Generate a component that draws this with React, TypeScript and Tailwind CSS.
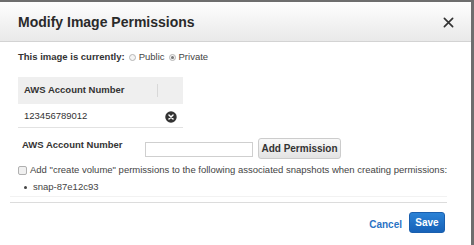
import React from "react";

export default function App() {
  return (
    <div
      className="w-[474px] h-[245px] bg-white border-t-2 border-r-[3px] border-[#6e6e6e] flex flex-col overflow-hidden"
      style={{ fontFamily: '"Liberation Sans", Arial, sans-serif' }}
    >
      <div className="h-[40px] shrink-0 flex items-center justify-between pl-[18px] pr-[17px] bg-gradient-to-b from-[#fefefe] to-[#e9e9e9] border-b border-[#d3d3d3]">
        <div className="text-[14px] font-bold text-[#2a2a2a] mt-[1px]">Modify Image Permissions</div>
        <svg width="11" height="11" viewBox="0 0 12 12" className="mt-[2px]">
          <path d="M1.5 1.5 L10.5 10.5 M10.5 1.5 L1.5 10.5" stroke="#333" strokeWidth="1.8" strokeLinecap="round" />
        </svg>
      </div>

      <div className="flex flex-col text-[9.5px] text-[#333] whitespace-nowrap">
        <div className="flex items-center h-[16px] mt-[7px] pl-[18px]">
          <span className="font-bold">This image is currently:</span>
          <span className="ml-[4px] w-[7px] h-[7px] rounded-full border border-[#b5b5b5] bg-[#f4f4f4]" />
          <span className="ml-[3px] text-[#444]">Public</span>
          <span className="ml-[4px] w-[7px] h-[7px] rounded-full border border-[#b5b5b5] bg-[#f4f4f4] flex items-center justify-center">
            <span className="w-[3px] h-[3px] rounded-full bg-[#777]" />
          </span>
          <span className="ml-[3px] text-[#444]">Private</span>
        </div>

        <div className="ml-[18px] mt-[12px] w-[165px] flex flex-col">
          <div className="h-[27px] bg-[#efefef] flex items-center pl-[6px] relative">
            <span className="font-bold text-[#333]">AWS Account Number</span>
            <span className="absolute left-[139px] top-[7px] w-px h-[13px] bg-[#d8d8d8]" />
          </div>
          <div className="h-[24px] flex items-center justify-between pl-[6px] pr-[6px] border-b border-[#e2e2e2]">
            <span className="text-[#333] mt-[2px]">123456789012</span>
            <svg width="12" height="12" viewBox="0 0 13 13" className="mt-[2px]">
              <circle cx="6.5" cy="6.5" r="6.2" fill="#333" />
              <path d="M4.3 4.3 L8.7 8.7 M8.7 4.3 L4.3 8.7" stroke="#fff" strokeWidth="1.6" strokeLinecap="round" />
            </svg>
          </div>
        </div>

        <div className="flex items-center mt-[9px] h-[22px]">
          <span className="ml-[22px] w-[123px] font-bold text-[#333] -mt-[6px]">AWS Account Number</span>
          <div className="w-[108px] h-[15px] border border-[#cfcfcf] bg-white mt-[2px]" />
          <div className="ml-[5px] w-[83px] h-[21px] rounded-[3px] border border-[#cccccc] bg-gradient-to-b from-[#f9f9f9] to-[#e3e3e3] flex items-center justify-center font-bold text-[#333] text-[10px]">
            Add Permission
          </div>
        </div>

        <div className="flex items-center mt-[3px] h-[16px] pl-[18px]">
          <span className="w-[9px] h-[9px] rounded-[2px] border border-[#b0b0b0] bg-[#f0f0f0]" />
          <span className="ml-[3px] text-[#444]">Add "create volume" permissions to the following associated snapshots when creating permissions:</span>
        </div>

        <div className="flex items-center h-[16px] pl-[24px] mt-[1px]">
          <span className="w-[3px] h-[3px] rounded-full bg-[#444]" />
          <span className="ml-[6px] text-[#444]">snap-87e12c93</span>
        </div>

        <div className="ml-[10px] mr-[24px] mt-[1px] h-px bg-[#f2f2f2]" />
        <div className="ml-[10px] mr-[24px] mt-[5px] h-px bg-[#dcdcdc]" />

        <div className="flex items-center justify-end mt-[11px] pr-[26px]">
          <span className="font-bold text-[#2a73c5] text-[10px] mr-[7px] mt-[1px]">Cancel</span>
          <div className="w-[36px] h-[21px] rounded-[3px] bg-gradient-to-b from-[#2b82d6] to-[#1762b8] border border-[#1a5fae] flex items-center justify-center font-bold text-white text-[10px] -mt-[2px]">
            Save
          </div>
        </div>
      </div>
    </div>
  );
}
